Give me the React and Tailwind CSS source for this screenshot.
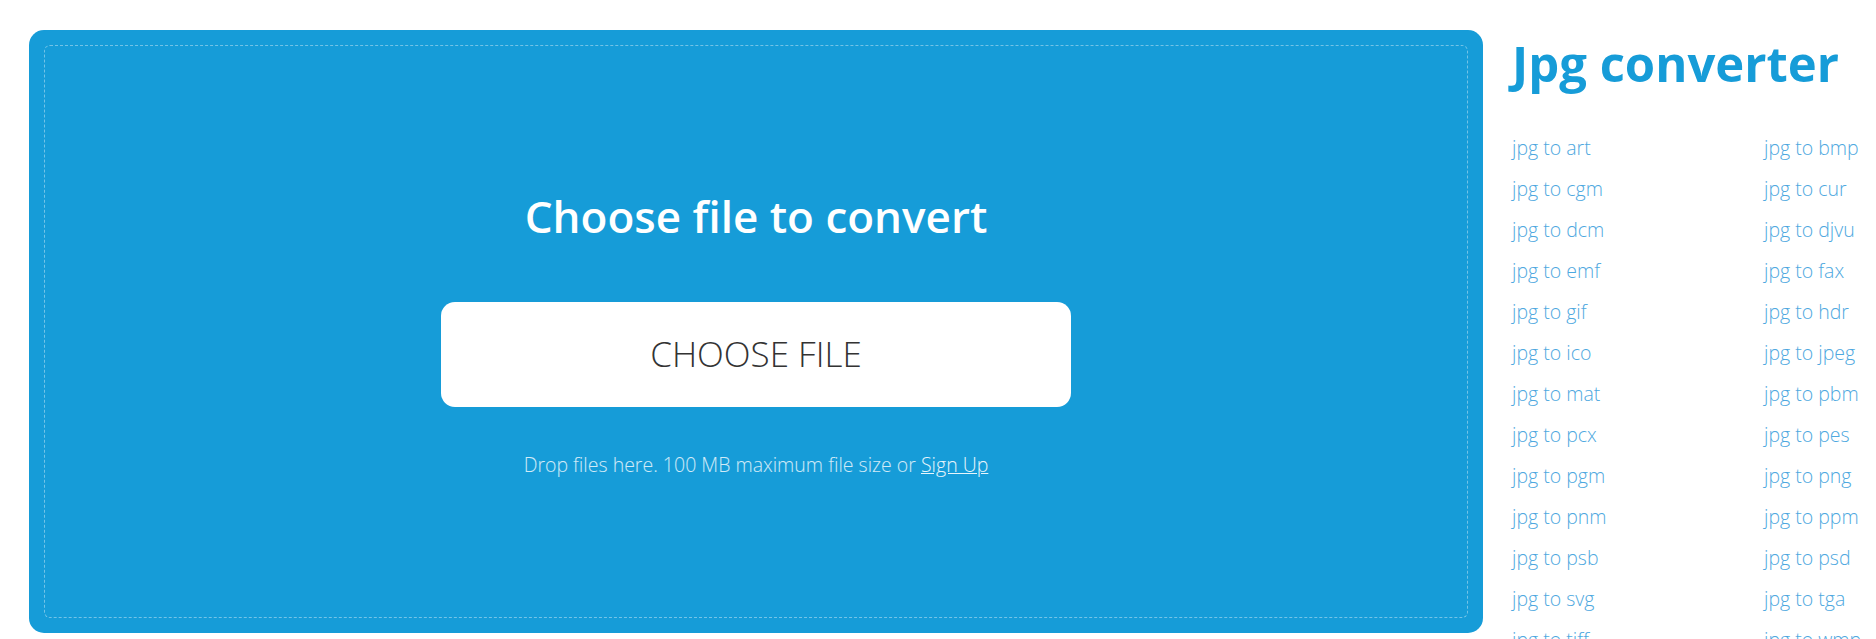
import React from "react";

const left = ["art", "cgm", "dcm", "emf", "gif", "ico", "mat", "pcx", "pgm", "pnm", "psb", "svg", "tiff"];
const right = ["bmp", "cur", "djvu", "fax", "hdr", "jpeg", "pbm", "pes", "png", "ppm", "psd", "tga", "wmp"];

export default function App() {
  const rows = [];
  for (let i = 0; i < left.length; i++) {
    rows.push(left[i], right[i]);
  }
  return (
    <div
      className="flex bg-white pt-[30px] pl-[29px] min-h-[639px]"
      style={{ fontFamily: '"Open Sans", "Noto Sans", sans-serif' }}
    >
      <div className="w-[1454px] h-[603px] shrink-0 rounded-[15px] bg-[#169cd8] p-[15px]">
        <div className="h-full rounded-[6px] border border-dashed border-white/40 flex flex-col items-center pt-[140px]">
          <h1 className="text-white font-semibold text-[44px] leading-[60px]">Choose file to convert</h1>
          <button className="mt-[56px] w-[630px] h-[105px] rounded-[14px] bg-white text-[#333] text-[35px] font-light">
            CHOOSE FILE
          </button>
          <p className="mt-[44px] text-[19.5px] leading-[28px] font-light text-white/80">
            Drop files here. 100 MB maximum file size or{" "}
            <a href="#" className="underline text-white/90">Sign Up</a>
          </p>
        </div>
      </div>
      <div className="ml-[29px] w-[364px] shrink-0">
        <h2 className="text-[#169cd8] font-bold text-[49px] leading-[67px]">Jpg converter</h2>
        <div className="grid grid-cols-[252px_1fr] mt-[30px]">
          {rows.map((r, i) => (
            <a key={i} href="#" className="block text-[19.5px] font-light text-[#4ea8e0] leading-[41px] whitespace-nowrap">
              jpg to {r}
            </a>
          ))}
        </div>
      </div>
    </div>
  );
}
